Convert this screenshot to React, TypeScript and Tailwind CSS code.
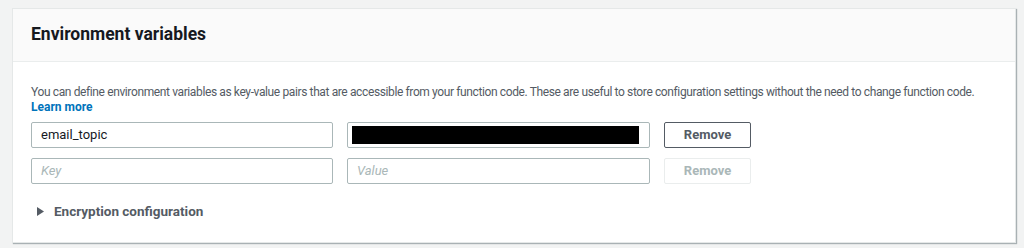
export default function App() {
  return (
    <div className="min-h-[248px] bg-[#f2f3f3] pt-[8px] pl-[12px] pr-[8px] font-['Roboto',sans-serif]">
      <div className="w-[1004px] border border-[#e5e8e8] bg-white shadow-[1px_1px_1px_rgba(0,28,36,0.3)]">
        <div className="h-[53px] bg-[#fafafa] border-b border-[#eaeded] flex items-center pl-[18px]">
          <h2 className="text-[17.5px] font-bold text-[#16191f] leading-none">Environment variables</h2>
        </div>
        <div className="pl-[18px] pr-[18px] pt-[23px] pb-[21px]">
          <p className="text-[12px] leading-[15px] tracking-[-0.38px] text-[#545b64] whitespace-nowrap">
            You can define environment variables as key-value pairs that are accessible from your function code. These are useful to store configuration settings without the need to change function code.
            <br />
            <a className="font-bold text-[#0073bb] tracking-normal">Learn more</a>
          </p>
          <div className="mt-[7px] flex flex-col gap-[10px]">
            <div className="flex items-center gap-[14px]">
              <div className="w-[302px] h-[26px] border border-[#aab7b8] rounded-[2px] flex items-center px-[9px] text-[13px] text-[#16191f]">
                email_topic
              </div>
              <div className="w-[303px] h-[26px] border border-[#aab7b8] rounded-[2px] flex items-center px-[4px]">
                <div className="w-[287px] h-[18px] bg-black" />
              </div>
              <button className="w-[87px] h-[26px] border border-[#545b64] rounded-[2px] text-[13px] font-bold text-[#545b64]">
                Remove
              </button>
            </div>
            <div className="flex items-center gap-[14px]">
              <div className="w-[302px] h-[26px] border border-[#aab7b8] rounded-[2px] flex items-center px-[9px] text-[13px] italic text-[#aab7b8]">
                Key
              </div>
              <div className="w-[303px] h-[26px] border border-[#aab7b8] rounded-[2px] flex items-center px-[9px] text-[13px] italic text-[#aab7b8]">
                Value
              </div>
              <button className="w-[87px] h-[26px] border border-[#eaeded] rounded-[2px] text-[13px] font-bold text-[#aab7b8]">
                Remove
              </button>
            </div>
          </div>
          <div className="mt-[17px] flex items-center gap-[10px] pl-[6px] text-[13.5px] font-bold text-[#545b64]">
            <svg width="7" height="9" viewBox="0 0 7 9"><path d="M0 0 L7 4.5 L0 9 Z" fill="#545b64" /></svg>
            <span>Encryption configuration</span>
          </div>
        </div>
      </div>
    </div>
  );
}
